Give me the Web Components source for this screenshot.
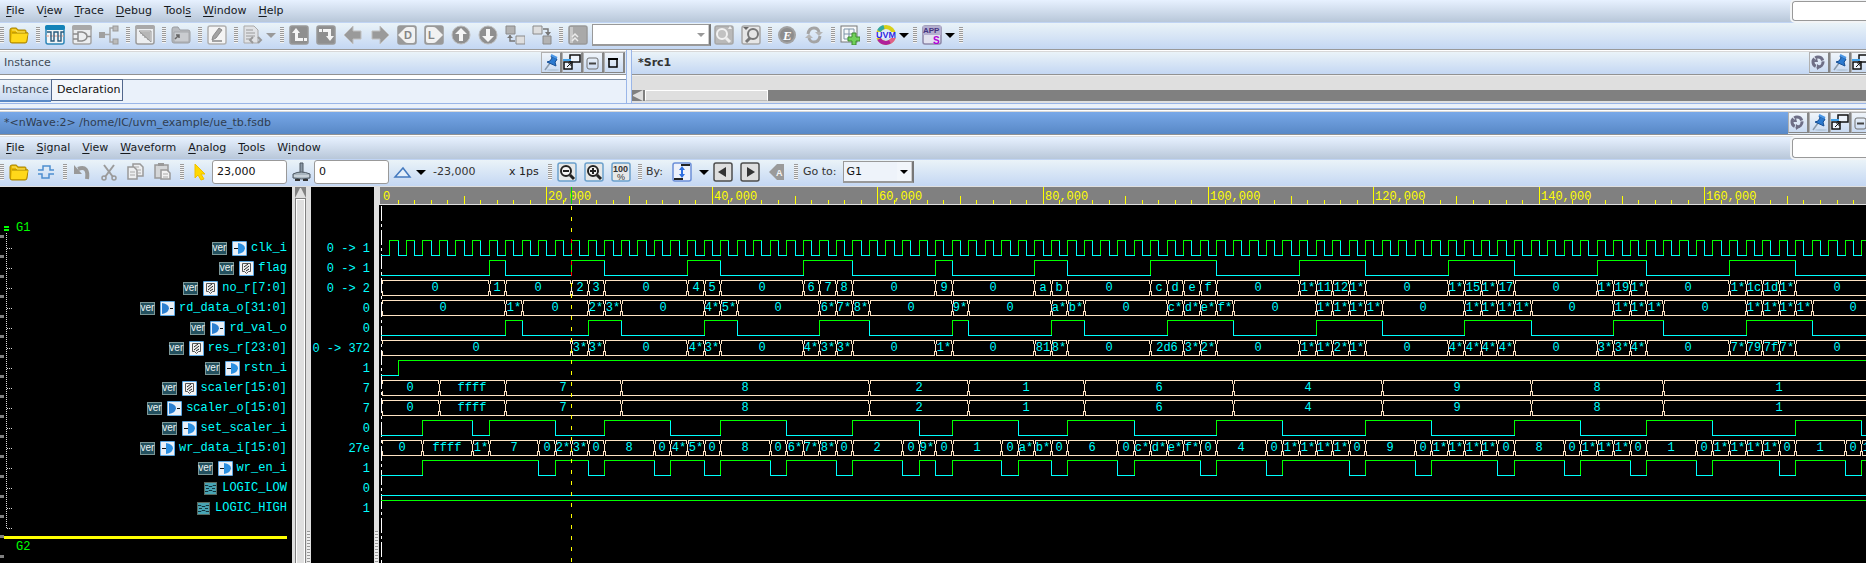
<!DOCTYPE html>
<html lang="en">
<head>
<meta charset="utf-8">
<title>nWave</title>
<style>
  html, body { height: 100%; }
  body { margin: 0; overflow: hidden; background: #dfdfdf; font: 11px/14px "DejaVu Sans", sans-serif; color: #16191d; }
</style>
</head>
<body>
<debug-app></debug-app>
<script>
const define = (name, css, html, setup) => {
  const template = document.createElement('template');
  template.innerHTML = `<style>*{box-sizing:border-box}${css}</style>${html}`;
  customElements.define(name, class extends HTMLElement {
    constructor() {
      super();
      this.attachShadow({ mode: 'open' }).append(template.content.cloneNode(true));
    }
    connectedCallback() { if (setup) setup(this, this.shadowRoot); }
  });
};

/* ---------- icon set, 20 x 20 grid ---------- */
const frame = (stroke, fill = '#eceef0') => `<rect x="1" y="1" width="18" height="18" rx="2" fill="${fill}" stroke="${stroke}" stroke-width="1.5"/>`;
const icons = {
  folder: `<path d="M1 5q0-2 2-2h4q1 0 2 2h7q1 0 1 1v2h2l-1 8q0 2-2 2H3q-2 0-2-2z" fill="#e8b800" stroke="#a88400"/><path d="M3 8h16l-2 8q0 1-1 1H2z" fill="#ffd81a"/><path d="M3 8h16" stroke="#a88400"/><path d="M3 5h4l1 2h8" fill="none" stroke="#ffe96a"/>`,
  wave: `${frame('#2f86b8', '#f3f5f6')}<rect x="0" y="0" width="20" height="5" rx="2" fill="#1483b8"/><path d="M1 11h18" stroke="#e09a8a" stroke-dasharray="3 1"/><path d="M2 7h4v9h3V7h4v9h3V7h3" fill="none" stroke="#27597c" stroke-width="1.4"/>`,
  gate: `${frame('#a5a5a5')}<rect x="0" y="0" width="20" height="5" rx="2" fill="#a9a9a9"/><path d="M6 7h4q5 1 5 4.500T10 16H6zM1 9h5M1 14h5M15 11.500h4" fill="none" stroke="#8b8b8b" stroke-width="1.5"/>`,
  tree: `<path d="M6 9.500h5M14 3h-3v14h3" fill="none" stroke="#a6a6a6" stroke-width="1.5"/><rect x="0" y="7" width="6" height="6" fill="#a0a0a0"/><rect x="14" y="1" width="5" height="5" fill="#bbb" stroke="#999"/><rect x="14" y="14" width="5" height="5" fill="#bbb" stroke="#999"/>`,
  filter: `${frame('#9b9b9b')}<rect x="0" y="0" width="20" height="4" rx="2" fill="#a9a9a9"/><path d="M4 6h12v11z" fill="#e4e4e4" stroke="#999"/><path d="M5 8h10M7 10h8M9 12h6M12 14h3" stroke="#888"/>`,
  folderGray: `<path d="M1 4q0-2 2-2h4l2 3h8q2 0 2 2v9q0 2-2 2H3q-2 0-2-2z" fill="#b9bcc0" stroke="#9a9da1"/><path d="M3 7h15v10H3z" fill="#c9ccd0" stroke="#a4a7ab"/><path d="M4 14l4-4M5 10h3v3" fill="none" stroke="#666" stroke-width="1.5"/>`,
  edit: `${frame('#b0b0b0', '#f4f4f4')}<path d="M6 11L12 3l3 2-6 8-4 2z" fill="#a2a2a2" stroke="#8a8a8a"/><path d="M5 16h10" stroke="#888" stroke-width="1.5"/>`,
  doc: `<path d="M1 1h10l4 4v13H1z" fill="#e0e2e5" stroke="#a9a9a9"/><path d="M3 5h7M3 8h9M3 11h9M3 14h4" stroke="#9a9a9a"/><path d="M10 12l-3 3 3 3M15 12l3 3-3 3" fill="none" stroke="#999" stroke-width="2"/>`,
  stepUp: `${frame('#999', '#8f8f8f')}<path d="M7 3L3 8h3v8h8v-3H9V8h2z" fill="#f5f5f5"/><path d="M15 13h3v3h-3z" fill="#f5f5f5"/>`,
  stepDown: `${frame('#999', '#8f8f8f')}<path d="M3 4h3v3H3zM7 4h8v7h3l-4 5-4-5h2V7H7z" fill="#f5f5f5"/>`,
  left: `<path d="M1 10L10 1v5h8v8h-8v5z" fill="#9a9a9a" stroke="#c0c0c0"/>`,
  right: `<path d="M19 10L10 1v5H2v8h8v5z" fill="#9a9a9a" stroke="#c0c0c0"/>`,
  driver: `${frame('#999', '#999')}<path d="M1 10L8 3q1-1 3-1h5q2 0 2 2v12q0 2-2 2h-5q-2 0-3-1z" fill="#f1f1f1"/><text x="7" y="14" font-size="11" font-weight="bold" fill="#858585">D</text>`,
  load: `${frame('#999', '#999')}<path d="M19 10l-7-7q-1-1-3-1H4Q2 2 2 4v12q0 2 2 2h5q2 0 3-1z" fill="#f1f1f1"/><text x="4" y="14" font-size="11" font-weight="bold" fill="#858585">L</text>`,
  up: `<circle cx="10" cy="10" r="9" fill="#8f8f8f" stroke="#bbb"/><path d="M10 3l6 6h-4v7H8V9H4z" fill="#f5f5f5"/>`,
  down: `<circle cx="10" cy="10" r="9" fill="#8f8f8f" stroke="#bbb"/><path d="M10 17l6-6h-4V4H8v7H4z" fill="#f5f5f5"/>`,
  swapUp: `<path d="M1 1h9v8H1z" fill="#b2b2b2" stroke="#8a8a8a"/><path d="M11 11h9v8h-9z" fill="#dedede" stroke="#8a8a8a"/><path d="M5 10v6h5" fill="none" stroke="#777" stroke-width="1.5"/><path d="M2 13l3-3 3 3z" fill="#777"/>`,
  swapDown: `<path d="M1 1h9v8H1z" fill="#dedede" stroke="#8a8a8a"/><path d="M11 11h8v8h-8z" fill="#b2b2b2" stroke="#8a8a8a"/><path d="M11 4h5v4" fill="none" stroke="#777" stroke-width="1.5"/><path d="M13 7h6l-3 4z" fill="#777"/>`,
  book: `${frame('#999', '#a9a9a9')}<rect x="2" y="2" width="3" height="16" fill="#c9c9c9"/><path d="M4 12l3-3 3 3M4 16l3-3 3 3" fill="none" stroke="#ececec" stroke-width="1.5"/>`,
  find: `${frame('#a7a7a7', '#b9b9b9')}<circle cx="8" cy="9" r="5" fill="#c2c2c2" stroke="#f2f2f2" stroke-width="2"/><path d="M12 13l4 4" stroke="#eee" stroke-width="3"/><path d="M14 4h4l-2-3z" fill="#eee"/>`,
  findNext: `${frame('#a7a7a7', '#e6e6e6')}<circle cx="12" cy="9" r="5" fill="none" stroke="#777" stroke-width="2"/><path d="M9 13l-4 4" stroke="#777" stroke-width="3"/><path d="M2 2h6L5 5z" fill="#666"/>`,
  letterE: `<circle cx="10" cy="10" r="9" fill="#a2a2a2"/><circle cx="10" cy="10" r="7" fill="#8d8d8d"/><text x="6" y="15" font-size="13" font-weight="bold" font-style="italic" font-family="Liberation Serif" fill="#fff">E</text>`,
  refresh: `<path d="M4 9q1-6 6-6 4 0 5 4M16 11q-1 6-6 6-4 0-5-4" fill="none" stroke="#a4a4a4" stroke-width="3"/><path d="M11 7h8l-4 4zM1 13h8L5 9z" fill="#b5b5b5"/>`,
  gridAdd: `<rect x="1" y="1" width="16" height="16" fill="#f7f9fa" stroke="#777"/><path d="M4 4h10v10H4zM4 9h10M9 4v10" fill="none" stroke="#7d93a8"/><path d="M12 8h4v4h4v4h-4v4h-4v-4H8v-4h4z" fill="#71d15a" stroke="#3e8a31"/>`,
  uvm: `<circle cx="10" cy="10" r="8" fill="none" stroke="#d8d019" stroke-width="4"/><path d="M3 14a8 8 0 0 0 12 2" fill="none" stroke="#b01f9c" stroke-width="4"/><path d="M18 11a8 8 0 0 1-4 6" fill="none" stroke="#e06088" stroke-width="4"/><path d="M3 6a8 8 0 0 1 5-4" fill="none" stroke="#31a9a0" stroke-width="4"/><path d="M0 7h20v6H0z" fill="#ecf0fb"/><text x="0" y="13" font-size="9" font-weight="bold" fill="#2c2ae0" font-family="Liberation Sans">UVM</text>`,
  apps: `${frame('#8d87a8', '#e2e2f0')}<rect x="1" y="1" width="18" height="9" fill="#b4aed0"/><text x="1" y="8" font-size="8" font-weight="bold" fill="#44357f" font-family="Liberation Sans">APP</text><text x="11" y="19" font-size="10" font-weight="bold" fill="#b000d8" font-family="Liberation Sans">S</text>`,
  signal: `<path d="M2 8h5V4h7v4h4M2 12h4v4h7v-4h5" fill="none" stroke="#4e8ed0" stroke-width="1.5"/>`,
  undo: `<path d="M6 7q11-4 9 10" fill="none" stroke="#999" stroke-width="4"/><path d="M2 3v9h8z" fill="#999"/>`,
  cut: `<path d="M5 3l9 12M15 3L6 15" stroke="#9b9b9b" stroke-width="2"/><circle cx="5" cy="16" r="2" fill="none" stroke="#999" stroke-width="1.5"/><circle cx="15" cy="16" r="2" fill="none" stroke="#999" stroke-width="1.5"/>`,
  copy: `<path d="M7 2h7l3 3v9H7z" fill="#eceef0" stroke="#999" stroke-width="1.5"/><path d="M2 5h6l3 3v9H2z" fill="#eceef0" stroke="#999" stroke-width="1.5"/><path d="M4 10h5M4 13h5M9 5h4M12 8h3M12 11h3" stroke="#aaa"/>`,
  paste: `<path d="M2 3h13v13H2z" fill="#d4d6d8" stroke="#999" stroke-width="1.5"/><path d="M5 1h6v3H5z" fill="#999"/><path d="M8 8h6l3 3v6H8z" fill="#f2f2f2" stroke="#999" stroke-width="1.5"/><path d="M10 12h5M10 15h5" stroke="#aaa"/>`,
  pointer: `<path d="M6 2v14l3-3 3 5 3-1-3-5h4z" fill="#ffd800" stroke="#f0c000"/>`,
  stamp: `<path d="M9 1h3v10H9z" fill="#8b99a6" stroke="#4e5963"/><path d="M2 12q8-4 17 0v4q-8 2-17 0z" fill="#a9b6c0" stroke="#4e5963"/><path d="M3 14h15" stroke="#e8eef2"/><path d="M4 18h5M12 18h5" stroke="#333" stroke-width="2"/>`,
  delta: `<path d="M2 15L10 6l7 9z" fill="#e4effa" stroke="#4479be" stroke-width="1.5"/>`,
  zoomOut: `${frame('#6ba0cc', '#e6e8e8')}<circle cx="9" cy="9" r="5" fill="#f5f5f5" stroke="#222" stroke-width="2"/><path d="M6 9h6" stroke="#222" stroke-width="2"/><path d="M13 13l4 4" stroke="#222" stroke-width="3"/>`,
  zoomIn: `${frame('#6ba0cc', '#e6e8e8')}<circle cx="9" cy="9" r="5" fill="#f5f5f5" stroke="#222" stroke-width="2"/><path d="M6 9h6M9 6v6" stroke="#222" stroke-width="2"/><path d="M13 13l4 4" stroke="#222" stroke-width="3"/>`,
  zoomAll: `${frame('#6ba0cc', '#e6e8e8')}<text x="2" y="10" font-size="9" font-weight="bold" fill="#333" font-family="Liberation Sans">100</text><text x="6" y="18" font-size="9" fill="#333" font-family="Liberation Sans">%</text>`,
  edge: `${frame('#6c8fd8', '#edf1fb')}<path d="M2 17h9M9 3h9" stroke="#222" stroke-width="2"/><path d="M10 6v8" stroke="#2f6fe0" stroke-width="2"/><path d="M7 8l3-4 3 4zM7 12l3 4 3-4z" fill="#2f6fe0"/>`,
  prev: `${frame('#4d4d4d', '#dedede')}<path d="M13 5v10l-8-5z" fill="#333"/>`,
  next: `${frame('#4d4d4d', '#dedede')}<path d="M7 5v10l8-5z" fill="#333"/>`,
  tagA: `<path d="M2 10l8-8h7v16h-7z" fill="#9a9a9a"/><text x="9" y="14" font-size="9" font-weight="bold" fill="#f5f5f5">A</text>`,
  pin: `<ellipse cx="12" cy="17" rx="6" ry="1" fill="#b7c9dc"/><path d="M4 17l5-7" stroke="#8a9aac" stroke-width="1.5"/><path d="M10 3l6 3-1 2-1 1 1 4-9-4 3-1 2-3z" fill="#2c7ad0" stroke="#174f95"/><path d="M10 2l6 3" stroke="#4b97e6" stroke-width="2"/>`,
  undock: `<path d="M8 2h10v7H8z" fill="#eef4fc" stroke="#111" stroke-width="1.500"/><path d="M2 9h8v7H2z" fill="#eef4fc" stroke="#111" stroke-width="1.500"/><path d="M1 7h8" stroke="#45a5ec" stroke-width="2"/><path d="M5 14l4-4M6 10h3v3" fill="none" stroke="#111"/>`,
  minimize: `<rect x="4" y="5" width="11" height="11" rx="2" fill="none" stroke="#707070"/><path d="M6 10.500h7" stroke="#444" stroke-width="2"/>`,
  maximize: `<rect x="5" y="6" width="8" height="8" fill="none" stroke="#000" stroke-width="1.500"/><path d="M4 6h10" stroke="#000" stroke-width="2"/>`,
  sync: `<circle cx="9" cy="9" r="5" fill="none" stroke="#6e6e86" stroke-width="3" stroke-dasharray="9 1"/><path d="M8 11l4 3-4 3zM4 9l4-4 1 4z" fill="#6e6e86"/>`
};
define('ui-icon', ':host{display:block;width:20px;height:20px}svg{display:block}', '<svg width="20" height="20" viewBox="0 0 20 20"></svg>',
  (el, root) => { root.querySelector('svg').innerHTML = icons[el.getAttribute('name')]; });

/* ---------- bars ---------- */
define('tool-button', ':host{display:block;flex:none;margin-right:7px}:host([tight]){margin-right:3px}button{display:block;border:0;padding:0;background:none;width:20px;height:20px}',
  '<button type="button"></button>',
  (el, root) => {
    const n = el.getAttribute('icon'), b = root.querySelector('button');
    b.innerHTML = `<ui-icon name="${n}"></ui-icon>`;
    b.setAttribute('aria-label', n);
  });
define('drop-arrow', `:host{display:block;flex:none;margin-right:4px}button{display:flex;align-items:center;border:0;padding:0;background:none;width:10px;height:20px;color:#000}
  :host([off]) button{color:#999}i{display:block;border:5px solid transparent;border-top-color:currentColor;border-bottom:0}`,
  '<button type="button" aria-label="more"><i></i></button>');
define('bar-grip', ':host{display:block;flex:none;width:4px;height:16px;margin-right:5px;background:repeating-linear-gradient(#9a9a9a 0 1px,#f4f4f4 1px 2px)}', '');
define('tool-bar', ':host{display:flex;align-items:center;box-sizing:border-box;height:26px;padding-bottom:2px;background:linear-gradient(#eaf3f8,#c4d7f3)}', '<slot></slot>');
define('menu-bar', `:host{display:flex;align-items:center;box-sizing:border-box;height:23px;padding-left:6px;gap:12px;background:linear-gradient(#e7f1ff,#b8c7d9);border-bottom:1px solid #c0d4f4}
  input{margin-left:auto;align-self:flex-start;margin-top:1px;width:74px;height:20px;border:1px solid #999;border-right:0;border-radius:3px 0 0 3px;background:#fff;outline:2px solid #f2f4f6;font:inherit}`,
  '<slot></slot><input type="text" aria-label="Search">');
define('menu-item', ':host{display:block}button{display:block;border:0;padding:0;background:none;font:inherit;color:inherit;white-space:nowrap}::slotted(u){text-underline-offset:2px;text-decoration-thickness:1px}', '<button type="button"><slot></slot></button>');

/* ---------- pane title with its window buttons ---------- */
define('pane-title', `:host{display:block;box-sizing:border-box;border-top:1px solid #d8d8d8;border-bottom:1px solid #929292;height:24px;overflow:hidden}
  div{display:flex;align-items:center;height:22px;padding-left:4px;background:linear-gradient(#eaf3f8,#c4d7f3);color:#414b57}
  :host([active]) div{background:linear-gradient(#78a8e8,#5888c6);color:#2f3d50}
  :host([strong]) div{font-weight:bold;color:#333;padding-left:6px}
  nav{display:flex;margin-left:auto;flex:none;overflow:hidden;height:22px;padding-right:1px;background:#dce8f5}
  :host([cut="2"]) nav{width:57px;padding:0}:host([cut="3"]) nav{width:78px;padding:0}
  button{flex:none;width:21px;height:21px;padding:0;border:1px solid #b0b0b0;border-right:2px solid #858585;border-bottom-color:#858585;background:linear-gradient(#f0f5fa,#c9daf2)}
  button ui-icon{margin-left:-1px}`,
  '<div><slot></slot><nav></nav></div>',
  (el, root) => {
    root.querySelector('nav').innerHTML = el.getAttribute('buttons').split(' ')
      .map(n => `<button type="button" aria-label="${n}"><ui-icon name="${n}"></ui-icon></button>`).join('');
  });

define('tab-strip', `:host{display:flex;height:24px;background:#eaf1fa;border-top:1px solid #7f90a6}
  button{height:22px;padding:0 2px;border:0;font:inherit;background:linear-gradient(#eef4fa,#c9daf2);color:#414b57;border-bottom:2px solid #5888c6;width:51px;white-space:nowrap;text-align:left}
  button+button{width:72px;margin-top:-1px;padding:0 5px;background:#f3f6fb;border:1px solid #51678c;color:#111}`,
  '<button type="button">Instance</button><button type="button">Declaration</button>');

define('h-scroll', `:host{display:flex;height:11px;background:#808080;align-items:stretch}
  i{width:0;border:5px solid transparent;border-right:10px solid #dfdfdf;border-left:0;margin-left:1px}
  b{width:123px;margin-left:2px;background:#dfdfdf;border:1px solid #fff;border-bottom-color:#bbb}`, '<i></i><b></b>');

define('text-field', `:host{display:block;flex:none;margin-right:4px}input{display:block;width:75px;height:24px;padding:0 4px 2px;border:1px solid #999;border-radius:3px;background:#fff;font:inherit;color:#111}`,
  '<input type="text">',
  (el, root) => { const i = root.querySelector('input'); i.value = el.getAttribute('value'); i.setAttribute('aria-label', el.getAttribute('label')); });

define('combo-box', `:host{display:flex;flex:none;position:relative;align-items:center}
  label{margin-right:7px;color:#333}label:empty{display:none}
  select{display:block;appearance:none;width:71px;height:22px;border:1px solid #999;border-right:2px solid #777;border-bottom:2px solid #999;background:#eef3fa;font:inherit;color:#111;padding:0 2px;border-radius:0}
  i{position:absolute;right:2px;top:1px;width:15px;height:19px;background:#f2f6fb;display:grid;place-items:center;border-right:1px solid #ccc;pointer-events:none}
  i::before{content:"";border:4px solid transparent;border-top-color:#000;border-bottom:0}
  :host([wide]){margin:0 3px 0 1px}
  :host([wide]) select{width:119px;background:#fff}:host([wide]) i{background:#fff}:host([wide]) i::before{border-top-color:#999}`,
  '<label for="s"></label><select id="s"></select><i></i>',
  (el, root) => {
    root.querySelector('label').textContent = el.getAttribute('label') || '';
    root.querySelector('select').innerHTML = `<option>${el.getAttribute('value') || ''}</option>`;
    if (!el.hasAttribute('label')) root.querySelector('select').setAttribute('aria-label', 'Find');
  });

/* ---------- signal data; times are in thousands of ps ---------- */
const flag = [13,15,23,27,37,41,51,57,67,69,79,83,93,101,111,119,129,137,147,153,163,171,181,200];
const clk = Array.from({ length: 200 }, (_, i) => i + 1);
const bus = s => s.trim().split(/\s+/).map(p => { const [t, v] = p.split('='); return [+t, v]; });
const scaler = bus('0=0 7=ffff 15=7 29=8 59=2 71=1 85=6 103=4 121=9 139=8 155=1 183=');
const signals = [
  { name: 'clk_i', kind: 'in', value: '0 -> 1', edges: clk },
  { name: 'flag', kind: 'reg', value: '0 -> 1', edges: flag },
  { name: 'no_r[7:0]', kind: 'reg', value: '0 -> 2', bus: bus('0=0 13=1 15=0 23=2 25=3 27=0 37=4 39=5 41=0 51=6 53=7 55=8 57=0 67=9 69=0 79=a 81=b 83=0 93=c 95=d 97=e 99=f 101=0 111=1* 113=11 115=12 117=1* 119=0 129=1* 131=15 133=1* 135=17 137=0 147=1* 149=19 151=1* 153=0 163=1* 165=1c 167=1d 169=1* 171=0 181=') },
  { name: 'rd_data_o[31:0]', kind: 'out', value: '0', bus: bus('0=0 15=1* 17=0 25=2* 27=3* 29=0 39=4* 41=5* 43=0 53=6* 55=7* 57=8* 59=0 69=9* 71=0 81=a* 83=b* 85=0 95=c* 97=d* 99=e* 101=f* 103=0 113=1* 115=1* 117=1* 119=1* 121=0 131=1* 133=1* 135=1* 137=1* 139=0 149=1* 151=1* 153=1* 155=0 165=1* 167=1* 169=1* 171=1* 173=0 183=') },
  { name: 'rd_val_o', kind: 'out', value: '0', edges: [15,17,25,29,39,43,53,59,69,71,81,85,95,103,113,121,131,139,149,155,165,173,183,200] },
  { name: 'res_r[23:0]', kind: 'reg', value: '0 -> 372', bus: bus('0=0 23=3* 25=3* 27=0 37=4* 39=3* 41=0 51=4* 53=3* 55=3* 57=0 67=1* 69=0 79=81 81=8* 83=0 93=2d6 97=3* 99=2* 101=0 111=1* 113=1* 115=2* 117=1* 119=0 129=4* 131=4* 133=4* 135=4* 137=0 147=3* 149=3* 151=4* 153=0 163=7* 165=79 167=7f 169=7* 171=0 181=') },
  { name: 'rstn_i', kind: 'in', value: '1', edges: [2] },
  { name: 'scaler[15:0]', kind: 'reg', value: '7', bus: scaler },
  { name: 'scaler_o[15:0]', kind: 'out', value: '7', bus: scaler },
  { name: 'set_scaler_i', kind: 'in', value: '0', edges: [5,11,13,21,27,35,41,49,57,65,69,77,83,91,101,109,119,127,137,145,153,161,171,179] },
  { name: 'wr_data_i[15:0]', kind: 'in', value: '27e', bus: bus('0=0 5=ffff 11=1* 13=7 19=0 21=2* 23=3* 25=0 27=8 33=0 35=4* 37=5* 39=0 41=8 47=0 49=6* 51=7* 53=8* 55=0 57=2 63=0 65=9* 67=0 69=1 75=0 77=a* 79=b* 81=0 83=6 89=0 91=c* 93=d* 95=e* 97=f* 99=0 101=4 107=0 109=1* 111=1* 113=1* 115=1* 117=0 119=9 125=0 127=1* 129=1* 131=1* 133=1* 135=0 137=8 143=0 145=1* 147=1* 149=1* 151=0 153=1 159=0 161=1* 163=1* 165=1* 167=1* 169=0 171=1 177=0 179=1* 181=') },
  { name: 'wr_en_i', kind: 'in', value: '1', edges: [5,19,21,25,27,33,35,39,41,47,49,55,57,63,65,67,69,75,77,81,83,89,91,99,101,107,109,117,119,125,127,135,137,143,145,151,153,159,161,169,171,177,179] },
  { name: 'LOGIC_LOW', kind: 'logic', value: '0', level: 0 },
  { name: 'LOGIC_HIGH', kind: 'logic', value: '1', level: 1 }
];

const kinds = {
  in: '<rect x="0" y="0" width="15" height="15" rx="1" fill="#5aa5e0"/><rect x="1" y="1" width="13" height="13" fill="#eaf0f8"/><path d="M6 2q7 1 7 5.500-1 4.500-7 5.500z" fill="#2b8fe0"/><path d="M2 7h4v1H2z" fill="#111"/>',
  out: '<rect x="0" y="0" width="15" height="15" rx="1" fill="#5aa5e0"/><rect x="1" y="1" width="13" height="13" fill="#eaf0f8"/><path d="M2 2q7 1 7 5.500-1 4.500-7 5.500z" fill="#2b7fd0"/><path d="M10 7h3v1h-3z" fill="#111"/>',
  reg: '<rect x="0" y="0" width="15" height="15" rx="1" fill="#5aa5e0"/><rect x="1" y="1" width="13" height="13" fill="#f4f5f6"/><path d="M3.500 2.500h8v8h-2l-2 2-2-2h-2z" fill="#f2f2f2" stroke="#555"/><path d="M5 6l4-3M5 9l5-4M7 10l3-2" stroke="#222"/>',
  logic: '<rect x="1" y="1" width="13" height="13" fill="#5a6a60"/><rect x="2" y="2" width="11" height="11" fill="#48a4b4"/><path d="M2 4.500h3l1 1h3l1-1h3M3 7.500h3M9 7.500h3M2 10.500h3l1-1h3l1 1h3" fill="none" stroke="#12323c"/>'
};
define('signal-row', `:host{display:flex;box-sizing:border-box;align-items:center;justify-content:flex-end;height:20px;padding-right:5px;color:#0ff;background:repeating-linear-gradient(90deg,#ddd 0 1px,#000 1px 2px) 7px 10px/6px 1px no-repeat}
  span{width:15px;height:13px;margin-right:5px;background:#23505e;border:1px solid #7b9696;color:#edf3f3;font:10px/10px "Liberation Sans",sans-serif;display:flex;justify-content:center}
  svg{display:block;margin-right:4px}`, '<span>ver</span><svg width="15" height="15"></svg><slot></slot>',
  (el, root) => {
    const k = el.getAttribute('kind');
    root.querySelector('svg').innerHTML = kinds[k];
    if (k === 'logic') root.querySelector('span').remove();
  });

const mono = '12px/20px "Liberation Mono",monospace';
define('signal-list', `:host{display:block;background:#000;position:relative;font:${mono};overflow:hidden}
  .marks{position:absolute;left:0;top:48px;bottom:0;width:4px;background:repeating-linear-gradient(#808080 0 3px,#000 3px 20px)}
  .stem{position:absolute;left:6px;top:46px;width:1px;height:296px;background:repeating-linear-gradient(#ddd 0 1px,#000 1px 2px)}
  .group{color:#0f0;padding-left:16px;line-height:16px;position:relative}
  .first{margin-top:31px;line-height:20px}
  .first::before{content:"";position:absolute;left:4px;top:8px;width:5px;height:1px;border:solid #0f0;border-width:2px 0}
  .end{height:18px;background:repeating-linear-gradient(90deg,#ddd 0 1px,#000 1px 2px) 7px 10px/6px 1px no-repeat}
  hr{margin:0 5px 0 4px;border:0;height:3px;background:#ff0}`,
  '<div class="group first">G1</div><div class="rows"></div><div class="end"></div><hr><div class="group">G2</div><div class="marks"></div><div class="stem"></div>',
  (el, root) => { root.querySelector('.rows').innerHTML = signals.map(s => `<signal-row kind="${s.kind}">${s.name}</signal-row>`).join(''); });

define('value-list', `:host{display:block;box-sizing:border-box;background:#000;color:#0ff;font:${mono};padding-top:52px;text-align:right;overflow:hidden;white-space:pre}div{height:20px;padding-right:4px}`, '<section></section>',
  (el, root) => { root.querySelector('section').innerHTML = signals.map(s => `<div>${s.value.replace('>', '&gt;')}</div>`).join(''); });

define('v-scroll', `:host{display:flex;flex-direction:column;background:#808080;border-left:3px solid #dfdfdf}
  i{border:5px solid transparent;border-bottom:10px solid #dfdfdf;border-top:0;margin:1px 0 1px}
  b{flex:1;background:#dfdfdf;border:1px solid #fff;border-bottom:0;margin:0 1px}`, '<i></i><b></b>');
define('pane-splitter', ':host{display:flex;align-items:flex-end;background:#dfdfdf;padding:0 1px}i{flex:1;height:32px;background:repeating-linear-gradient(#999 0 1px,#eee 1px 3px)}', '<i></i>');

/* ---------- waveform view ---------- */
const SCALE = 8.27, ORIGIN = 2, END = 480;
const X = t => ORIGIN + Math.round(t * SCALE);
const box = (x, y, w, h) => `M${x} ${y}h${w}v${h}h${-w}z`;

define('time-ruler', ':host{display:block;height:18px;background:#808080;border-bottom:1px solid #dfdfdf;margin-left:1px;overflow:hidden}svg{display:block}text{font:12px "Liberation Mono",monospace;fill:#ff0}',
  '<svg width="100%" height="17"></svg>',
  (el, root) => {
    let ticks = '', labels = '<text x="3" y="13">0</text>';
    for (let t = 2; t < END; t += 2) {
      const h = t % 20 === 0 ? 17 : t % 10 === 0 ? 8 : 4;
      ticks += box(X(t) - 1, 17 - h, 1, h);
      if (t % 20 === 0 && t < 180) labels += `<text x="${X(t) + 1}" y="13">${t},000</text>`;
    }
    root.querySelector('svg').innerHTML = `<path fill="#ff0" d="${ticks}"/>${labels}<path fill="#0d0" d="${box(X(23) - 1, 0, 1, 17)}"/>`;
  });

define('wave-canvas', ':host{display:block;flex:1;background:#000;overflow:hidden;min-height:0}svg{display:block}text{font:12px "Liberation Mono",monospace;fill:#0ff;text-anchor:middle}',
  '<svg width="100%" height="100%"></svg>',
  (el, root) => {
    let low = '', high = '', frames = '', labels = '';
    signals.forEach((s, i) => {
      const top = 35 + i * 20, bottom = top + 15;
      if (s.edges) {
        let x = X(0), up = false;
        [...s.edges, END].forEach(t => {
          const nx = X(t), line = box(x, up ? top : bottom, nx - x + 1, 1);
          if (up) { high += line; low += box(nx, top + 1, 1, 15); }
          else { low += line; high += box(nx, top, 1, 15); }
          x = nx; up = !up;
        });
      } else if (s.bus) {
        s.bus.forEach(([t, v], n) => {
          const next = s.bus[n + 1] ? s.bus[n + 1][0] : END, a = X(t) + 1, b = X(next) - 1;
          frames += box(a, top, b - a + 1, 1) + box(a, bottom, b - a + 1, 1);
          frames += box(a, top, 1, 4) + box(a, bottom - 4, 1, 4) + box(b, top, 1, 4) + box(b, bottom - 4, 1, 4) + box(b + 1, top + 4, 1, 8);
          if (v) labels += `<text x="${Math.round((X(t) + X(next)) / 2)}" y="${top + 11}">${v}</text>`;
        });
      } else if (s.level) high += box(X(0), 295, 4000, 1);
      else low += box(X(0), 290, 4000, 1);
    });
    const dashes = (x, on, off, from, to) => { let d = ''; for (let y = from; y < to; y += on + off) d += box(x, y, 1, on); return d; };
    const c = X(23);
    root.querySelector('svg').innerHTML =
      `<path fill="#fff" d="${dashes(2, 15, 9, 1, 2000)}${dashes(2, 3, 21, 19, 2000)}"/>
       <path fill="#0ff" d="${low}"/><path fill="#0f0" d="${high}"/><path fill="#ffe4c4" d="${frames}"/>${labels}
       <path fill="#ff0" d="${dashes(c, 4, 7, 1, 2000)}"/><path fill="#f00" d="${dashes(c, 4, 7, 34, 50)}${dashes(c, 4, 7, 56, 70)}"/>`;
  });
define('wave-pane', ':host{display:flex;flex-direction:column;min-width:0;overflow:hidden;background:#dfdfdf}', '<time-ruler></time-ruler><wave-canvas></wave-canvas>');

/* ---------- application ---------- */
const buttons = names => names.split(' ').map(n => n === '|' ? '<bar-grip></bar-grip>' : `<tool-button icon="${n}"></tool-button>`).join('');
define('debug-app', `
  :host{display:flex;flex-direction:column;height:100%;overflow:hidden}
  .main{border-bottom:1px solid #999;flex:none}
  .docks{display:grid;grid-template-columns:313fr 6px 617fr;height:54px;flex:none;border-bottom:1px solid #9ab6e8}
  .docks>*{min-width:0}
  .docks section{padding-top:1px;background:#fff;display:flex;flex-direction:column}
  .divider{background:#eaf1fa;border:solid #9ab6e8;border-width:0 1px}
  .instance tab-strip{margin-top:4px;flex:1}
  .source h-scroll{margin-top:auto;margin-bottom:2px}
  .source{background:linear-gradient(#fff 25px,#dfdfdf 26px)!important}
  .band{height:5px;flex:none;background:#eaf1fa;border-bottom:1px solid #9ab6e8}
  .wavewin{border-top:1px solid #999;background:#fff;padding-top:1px;display:flex;flex-direction:column;flex:1;min-height:0}
  .wavewin>*{flex:none}
  .wavewin menu-bar{margin-top:1px;border-top:1px solid #ddd;height:24px}
  .work{flex:1!important;min-height:0;display:grid;grid-template-columns:292px 14px 5px 63px 5px 1fr;grid-template-rows:minmax(0,1fr);border-top:1px solid #dfdfdf;background:#dfdfdf}
  .delta{width:76px;margin-left:3px;color:#333}.unit{width:39px;color:#222;white-space:nowrap}.by{margin-right:9px;margin-left:-1px;color:#333}`,
  `<div class="main">
    <menu-bar><menu-item><u>F</u>ile</menu-item><menu-item>V<u>i</u>ew</menu-item><menu-item><u>T</u>race</menu-item><menu-item><u>D</u>ebug</menu-item><menu-item>Tool<u>s</u></menu-item><menu-item><u>W</u>indow</menu-item><menu-item><u>H</u>elp</menu-item></menu-bar>
    <tool-bar>${buttons('| folder | wave gate tree | filter | folderGray | edit |')}<tool-button icon="doc" tight></tool-button><drop-arrow off></drop-arrow>${buttons('| stepUp stepDown left right driver load up down swapUp swapDown |')}<tool-button icon="book" tight></tool-button><combo-box wide></combo-box>${buttons('find findNext | letterE refresh | gridAdd |')}<tool-button icon="uvm" tight></tool-button><drop-arrow></drop-arrow><bar-grip></bar-grip><tool-button icon="apps" tight></tool-button><drop-arrow></drop-arrow><bar-grip></bar-grip></tool-bar>
  </div>
  <div class="docks">
    <section class="instance"><pane-title buttons="pin undock minimize maximize">Instance</pane-title><tab-strip></tab-strip></section>
    <div class="divider"></div>
    <section class="source"><pane-title strong cut="2" buttons="sync pin undock">*Src1</pane-title><h-scroll></h-scroll></section>
  </div>
  <div class="band"></div>
  <div class="wavewin">
    <pane-title active cut="3" buttons="sync pin undock minimize">*&lt;nWave:2&gt; /home/IC/uvm_example/ue_tb.fsdb</pane-title>
    <menu-bar><menu-item><u>F</u>ile</menu-item><menu-item><u>S</u>ignal</menu-item><menu-item><u>V</u>iew</menu-item><menu-item><u>W</u>aveform</menu-item><menu-item><u>A</u>nalog</menu-item><menu-item><u>T</u>ools</menu-item><menu-item>W<u>i</u>ndow</menu-item></menu-bar>
    <tool-bar>${buttons('| folder signal | undo cut copy paste |')}<tool-button icon="pointer" tight></tool-button><text-field value="23,000" label="Cursor"></text-field><tool-button icon="stamp" tight></tool-button><text-field value="0" label="Marker"></text-field><tool-button icon="delta" tight></tool-button><drop-arrow></drop-arrow><span class="delta">-23,000</span><span class="unit">x 1ps</span>${buttons('| zoomOut zoomIn zoomAll |')}<span class="by">By:</span><tool-button icon="edge"></tool-button><drop-arrow></drop-arrow>${buttons('prev next tagA |')}<combo-box label="Go to:" value="G1"></combo-box></tool-bar>
    <div class="work"><signal-list></signal-list><v-scroll></v-scroll><pane-splitter></pane-splitter><value-list></value-list><pane-splitter></pane-splitter><wave-pane></wave-pane></div>
  </div>`);
</script>
</body>
</html>
